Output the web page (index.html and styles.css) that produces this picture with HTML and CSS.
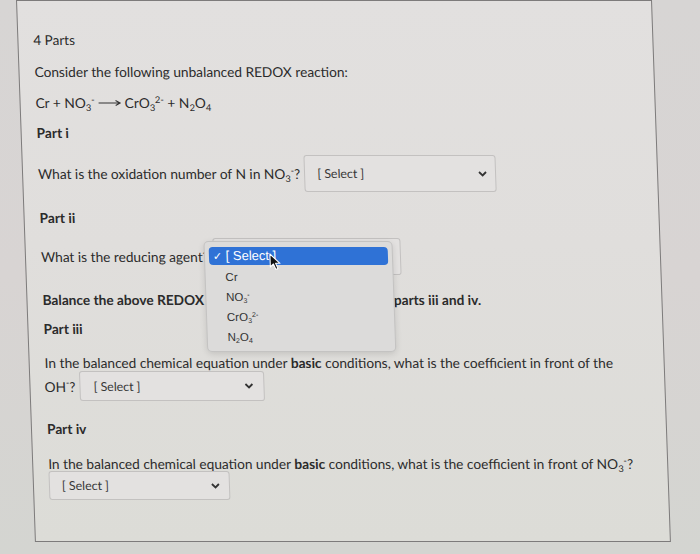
FILE: index.html
```html
<!DOCTYPE html>
<html>
<head>
<meta charset="utf-8">
<link rel="stylesheet" href="styles.css">
</head>
<body>
<div class="screen">
  <div class="panel">
    <h2 class="title">4 Parts</h2>
    <p class="line intro">Consider the following unbalanced REDOX reaction:</p>
    <p class="line eq">Cr + NO<sub>3</sub><sup>-</sup><svg class="arrow" width="24" height="8" viewBox="0 0 24 8"><path d="M1 4H22M18 1.5L22.5 4L18 6.5" fill="none" stroke="#333" stroke-width="1.1"/></svg>CrO<sub>3</sub><sup>2-</sup> + N<sub>2</sub>O<sub>4</sub></p>

    <h3 class="part p1">Part i</h3>
    <div class="qrow q1">
      <span class="qtext">What is the oxidation number of N in NO<sub>3</sub><sup>-</sup>?</span>
      <div class="select s1"><span class="ph">[ Select ]</span><svg class="chev" width="9" height="6" viewBox="0 0 9 6"><path d="M1 1L4.5 4.5L8 1" fill="none" stroke="#333" stroke-width="1.8"/></svg></div>
    </div>

    <h3 class="part p2">Part ii</h3>
    <div class="qrow q2">
      <span class="qtext">What is the reducing agent?</span>
      <div class="select s2"><span class="ph">[ Select ]</span><svg class="chev" width="9" height="6" viewBox="0 0 9 6"><path d="M1 1L4.5 4.5L8 1" fill="none" stroke="#333" stroke-width="1.8"/></svg>
        <div class="menu">
          <div class="opt sel"><span class="check">✓</span>[ Select ]</div>
          <div class="opt">Cr</div>
          <div class="opt">NO<sub>3</sub><sup>-</sup></div>
          <div class="opt">CrO<sub>3</sub><sup>2-</sup></div>
          <div class="opt">N<sub>2</sub>O<sub>4</sub></div>
        </div>
        <svg class="cursor" width="12" height="18" viewBox="0 0 12 18"><path d="M1 1V14L4.2 11L6.5 16.5L8.6 15.6L6.4 10.3H10.8Z" fill="#111" stroke="#fff" stroke-width="1.1" stroke-linejoin="round"/></svg>
      </div>
    </div>

    <p class="line bold balance">Balance the above REDOX<span class="hidden-part"> reaction and use that to answer </span>parts iii and iv.</p>

    <h3 class="part p3">Part iii</h3>
    <p class="line q3a">In the balanced chemical equation under <b>basic</b> conditions, what is the coefficient in front of the</p>
    <div class="qrow q3b">
      <span class="qtext">OH<sup>-</sup>?</span>
      <div class="select s3"><span class="ph">[ Select ]</span><svg class="chev" width="9" height="6" viewBox="0 0 9 6"><path d="M1 1L4.5 4.5L8 1" fill="none" stroke="#333" stroke-width="1.8"/></svg></div>
    </div>

    <h3 class="part p4">Part iv</h3>
    <p class="line q4a">In the balanced chemical equation under <b>basic</b> conditions, what is the coefficient in front of NO<sub>3</sub><sup>-</sup>?</p>
    <div class="select s4"><span class="ph">[ Select ]</span><svg class="chev" width="9" height="6" viewBox="0 0 9 6"><path d="M1 1L4.5 4.5L8 1" fill="none" stroke="#333" stroke-width="1.8"/></svg></div>
  </div>
</div>
</body>
</html>
```

FILE: styles.css
```css
html, body {
  margin: 0;
  padding: 0;
}
body {
  width: 700px;
  height: 554px;
  overflow: hidden;
  background: #d6d3d2;
  font-family: Lato, "Open Sans", sans-serif;
  color: #2b2b2b;
}
.screen {
  height: 554px;
  background: linear-gradient(180deg, #d7d5d4 0%, #d8d4d3 50%, #d4d5d1 100%);
  overflow: hidden;
}
.panel {
  box-sizing: border-box;
  margin-left: 16px;
  width: 636px;
  height: 542px;
  border: 1px solid #7d7b7b;
  background: linear-gradient(180deg, #e2e0df 0%, #e0dedc 45%, #dcdcd7 100%);
  transform: skewX(2deg);
  transform-origin: 0 0;
  padding: 30px 0 0 15px;
}
.title, .part, .line {
  margin: 0;
  font-size: 13.7px;
  line-height: 18px;
}
.title {
  font-weight: 400;
  font-size: 13.5px;
}
.part {
  font-weight: 700;
}
.bold {
  font-weight: 700;
}
b {
  font-weight: 700;
}
.hidden-part {
  word-spacing: -1.2px;
}
sub, sup {
  font-size: 0.68em;
  line-height: 0;
  position: relative;
  vertical-align: baseline;
}
sub { top: 0.3em; }
sup { top: -0.55em; }

.intro { margin-top: 14px; }
.eq { margin-top: 13px; }
.arrow { margin: 0 3px 0 3px; vertical-align: 1px; }
.p1 { margin-top: 12px; }

.qrow {
  display: flex;
  align-items: center;
  gap: 4px;
  font-size: 13.7px;
}
.q1 { margin-top: 13px; height: 37px; }
.p2 { margin-top: 17px; }
.q2 { margin-top: 11px; height: 37px; }
.balance { margin-top: 16px; }
.p3 { margin-top: 11px; }
.q3a { margin-top: 17px; line-height: 16px; }
.q3b { margin-top: 0; height: 30px; margin-left: -1px; gap: 4px; }
.p4 { margin-top: 19px; }
.q4a { margin-top: 19px; line-height: 14px; }

.select {
  box-sizing: border-box;
  position: relative;
  display: flex;
  align-items: center;
  justify-content: space-between;
  border: 1px solid #c3c1c0;
  border-radius: 3px;
  background: #e3e1e0;
  font-size: 12.4px;
  color: #383838;
}
.s1 { width: 192px; height: 37px; padding: 0 8px 0 12px; }
.s2 { width: 188px; height: 37px; padding: 0 8px 0 12px; }
.s3 { width: 185px; height: 30px; padding: 0 10px 0 13px; }
.s4 { width: 181px; height: 29px; margin-top: 0; padding: 0 9px 0 12px; }

.menu {
  position: absolute;
  left: -10px;
  top: 2px;
  width: 189px;
  height: 111px;
  box-sizing: border-box;
  padding: 5px 4px 0 4px;
  background: #dcdbda;
  border: 1px solid #c4c3c2;
  border-radius: 5px;
  box-shadow: 0 2px 6px rgba(0, 0, 0, 0.12);
  font-family: "Liberation Sans", Arial, sans-serif;
  color: #333;
}
.opt {
  height: 20px;
  line-height: 20px;
  padding-left: 16px;
  font-size: 11.5px;
}
.opt sub, .opt sup { font-size: 0.62em; }
.opt.sel {
  height: 18px;
  line-height: 18px;
  margin-bottom: 2px;
  background: #2f72d6;
  color: #fff;
  border-radius: 4px;
  padding-left: 4px;
  font-size: 13px;
}
.check {
  display: inline-block;
  width: 10px;
  margin-right: 3px;
  font-size: 11px;
}
.cursor {
  position: absolute;
  left: 55px;
  top: 14px;
}
```
